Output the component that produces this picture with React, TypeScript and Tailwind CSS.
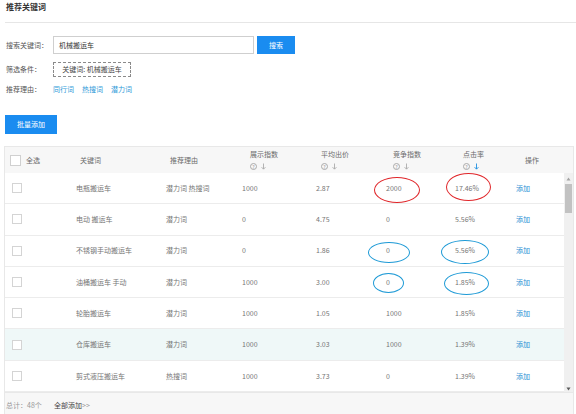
import React from "react";

type Mark = { left: number; top: number; w: number; h: number; color: "red" | "blue" };

type Row = {
   keyword: string;
   reason: string;
   show: string;
   price: string;
   compete: string;
   ctr: string;
   hover?: boolean;
   competeMark?: Mark;
   ctrMark?: Mark;
};

const rows: Row[] = [
   {
      keyword: "电瓶搬运车", reason: "潜力词 热搜词", show: "1000", price: "2.87", compete: "2000", ctr: "17.46%",
      competeMark: { left: -12, top: 4, w: 46, h: 26, color: "red" },
      ctrMark: { left: -9, top: 0, w: 45, h: 28, color: "red" },
   },
   { keyword: "电动 搬运车", reason: "潜力词", show: "0", price: "4.75", compete: "0", ctr: "5.56%" },
   {
      keyword: "不锈钢手动搬运车", reason: "潜力词", show: "0", price: "1.86", compete: "0", ctr: "5.56%",
      competeMark: { left: -18, top: 6, w: 42, h: 21, color: "blue" },
      ctrMark: { left: -14, top: 4, w: 48, h: 24, color: "blue" },
   },
   {
      keyword: "油桶搬运车 手动", reason: "潜力词", show: "1000", price: "3.00", compete: "0", ctr: "1.85%",
      competeMark: { left: -13, top: 6, w: 31, h: 20, color: "blue" },
      ctrMark: { left: -11, top: 5, w: 45, h: 23, color: "blue" },
   },
   { keyword: "轮胎搬运车", reason: "潜力词", show: "1000", price: "1.05", compete: "1000", ctr: "1.85%" },
   { keyword: "仓库搬运车", reason: "潜力词", show: "1000", price: "3.03", compete: "1000", ctr: "1.39%", hover: true },
   { keyword: "剪式液压搬运车", reason: "热搜词", show: "1000", price: "3.73", compete: "0", ctr: "1.39%" },
];

function Ellipse({ mark }: { mark: Mark }) {
   return (
      <span
         className={`absolute rounded-[50%] border-[1.3px] ${mark.color === "red" ? "border-[#e0262a]" : "border-[#1e9ad6]"}`}
         style={{ left: mark.left, top: mark.top, width: mark.w, height: mark.h }}
      />
   );
}

function Checkbox() {
   return <span className="block w-[10px] h-[10px] border border-[#d4d4d4] bg-white" />;
}

// "? ↓" hint under the sortable column titles
function SortHint({ active }: { active?: boolean }) {
   return (
      <div className="flex items-center gap-[4px] h-[8px]">
         <span className="flex items-center justify-center w-[7px] h-[7px] rounded-full border-[0.8px] border-[#aaa] text-[5px] leading-none text-[#999]">?</span>
         <svg width="5" height="7" viewBox="0 0 5 7" className={active ? "text-[#1e8ee0]" : "text-[#aaa]"}>
            <path d="M2.5 0.5V6M0.6 4.2L2.5 6.2L4.4 4.2" fill="none" stroke="currentColor" strokeWidth="0.9" />
         </svg>
      </div>
   );
}

function HeadCell({ width, pl, title, sort, active }: { width: number; pl: number; title: string; sort?: boolean; active?: boolean }) {
   return (
      <div className="flex flex-col justify-center gap-[4px] shrink-0" style={{ width, paddingLeft: pl }}>
         <div className="leading-[9px]">{title}</div>
         {sort && <SortHint active={active} />}
      </div>
   );
}

export default function App() {
   return (
      <div className="w-[576px] h-[414px] overflow-hidden bg-white text-[7px] text-[#757575] font-['Noto_Sans_CJK_SC','Microsoft_YaHei',sans-serif]">
         <div className="pl-[6px] pt-[3px] h-[22px] text-[8px] leading-[8px] font-bold text-[#333]">推荐关键词</div>
         <div className="ml-[5px] border-t border-[#e6e6e6]" />

         {/* search form */}
         <div className="mt-[13px] flex items-center h-[18px]">
            <div className="w-[53px] pl-[6px] text-[#555]">搜索关键词：</div>
            <div className="w-[201px] h-[18px] border border-[#cfcfcf] flex items-center pl-[5px] text-[#333]">机械搬运车</div>
            <button className="ml-[3px] w-[38px] h-[18px] bg-[#1a8cf0] text-white flex items-center justify-center">搜索</button>
         </div>
         <div className="mt-[8px] flex items-center h-[15px]">
            <div className="w-[53px] pl-[6px] text-[#555]">筛选条件：</div>
            <div className="w-[78px] h-[15px] border border-dashed border-[#8a8a8a] flex items-center justify-center text-[#444]">关键词: 机械搬运车</div>
         </div>
         <div className="mt-[5px] flex items-center h-[14px]">
            <div className="w-[53px] pl-[6px] text-[#555]">推荐理由：</div>
            <div className="flex gap-[8px] text-[#2b98d8]">
               <span>同行词</span>
               <span>热搜词</span>
               <span>潜力词</span>
            </div>
         </div>

         <button className="mt-[19px] ml-[5px] w-[52px] h-[19px] bg-[#1a8cf0] text-white flex items-center justify-center">批量添加</button>

         {/* keyword table */}
         <div className="mt-[12px] ml-[4px] w-[570px] border-l border-r border-t border-[#e8e8e8]">
            <div className="flex h-[26px] bg-[#f7f7f7] text-[#6a6a6a]">
               <div className="w-[71px] shrink-0 flex items-center pl-[5px] gap-[5px]">
                  <span className="block w-[11px] h-[11px] border border-[#d0d0d0] bg-white" />
                  <span>全选</span>
               </div>
               <HeadCell width={90} pl={4} title="关键词" />
               <HeadCell width={76} pl={4} title="推荐理由" />
               <HeadCell width={74} pl={8} title="展示指数" sort />
               <HeadCell width={70} pl={5} title="平均出价" sort />
               <HeadCell width={69} pl={7} title="竞争指数" sort />
               <HeadCell width={61} pl={8} title="点击率" sort active />
               <HeadCell width={57} pl={9} title="操作" />
            </div>

            <div className="flex h-[219px] overflow-hidden">
               <div className="w-[559px]">
                  {rows.map((r) => (
                     <div key={r.keyword} className={`flex items-center h-[31.3px] border-b border-[#ececec] ${r.hover ? "bg-[#eff8f8]" : "bg-white"}`}>
                        <div className="w-[71px] shrink-0 pl-[7px]"><Checkbox /></div>
                        <div className="w-[90px] shrink-0">{r.keyword}</div>
                        <div className="w-[76px] shrink-0">{r.reason}</div>
                        <div className="w-[74px] shrink-0">{r.show}</div>
                        <div className="w-[70px] shrink-0">{r.price}</div>
                        <div className="w-[69px] shrink-0 relative h-full flex items-center">
                           {r.compete}
                           {r.competeMark && <Ellipse mark={r.competeMark} />}
                        </div>
                        <div className="w-[61px] shrink-0 relative h-full flex items-center">
                           {r.ctr}
                           {r.ctrMark && <Ellipse mark={r.ctrMark} />}
                        </div>
                        <div className="w-[48px] shrink-0 text-[#2b90d4]">添加</div>
                     </div>
                  ))}
               </div>
               {/* scrollbar */}
               <div className="w-[9px] bg-[#f0f0f0] flex flex-col items-center">
                  <svg width="5" height="4" viewBox="0 0 5 4" className="mt-[4px]"><path d="M2.5 0.5L4.5 3.5H0.5Z" fill="#a3a3a3" /></svg>
                  <div className="mt-[3px] w-[7px] h-[29px] bg-[#c2c2c2]" />
                  <div className="flex-1" />
                  <svg width="5" height="4" viewBox="0 0 5 4" className="mb-[1px]"><path d="M0.5 0.5H4.5L2.5 3.5Z" fill="#5a5a5a" /></svg>
               </div>
            </div>

            <div className="h-[26px] border-t border-[#e8e8e8] bg-[#f7f7f7] flex items-center pl-[1px] text-[#999]">
               <span className="w-[48px]">总计：48个</span>
               <span className="text-[#444]">全部添加<span className="text-[#999]">&gt;&gt;</span></span>
            </div>
         </div>
      </div>
   );
}
